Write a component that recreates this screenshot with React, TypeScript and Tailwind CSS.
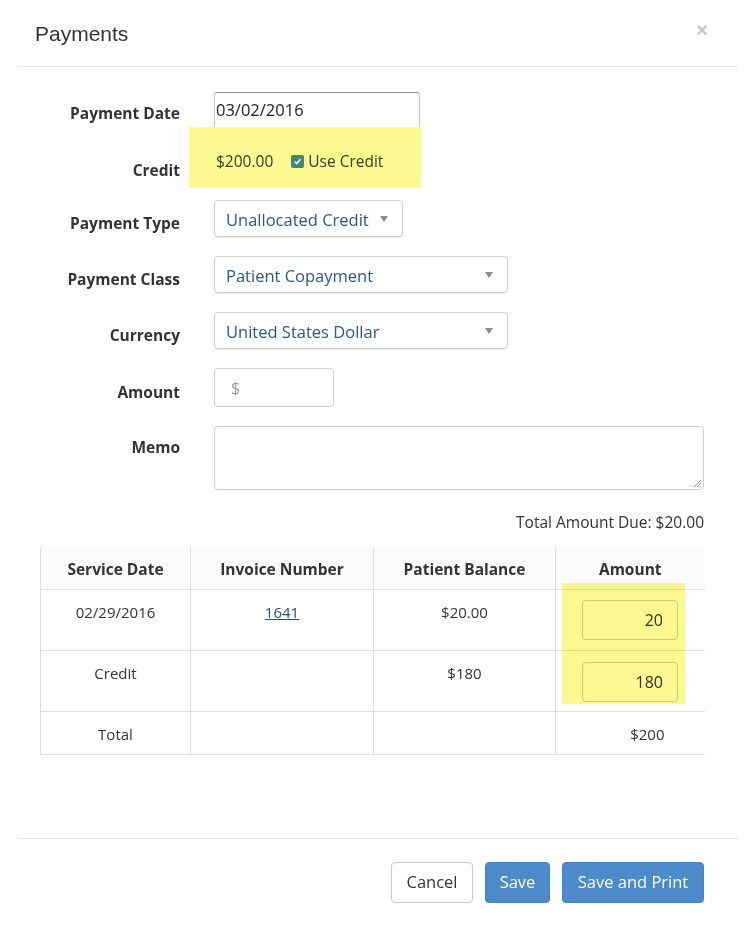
import type { ReactNode } from 'react';

function Caret() {
  return (
    <svg width="8" height="6" viewBox="0 0 8 6" className="shrink-0">
      <path d="M0 0 L8 0 L4 6 Z" fill="#8a8a8a" />
    </svg>
  );
}

function FormRow({ label, children, labelClass = 'mt-[8px]', rowClass = 'items-center' }: { label: string; children: ReactNode; labelClass?: string; rowClass?: string }) {
  return (
    <div className={`flex ${rowClass}`}>
      <div className={`w-[180px] shrink-0 text-right text-[15.5px] font-bold leading-5 text-[#333] ${labelClass}`}>{label}</div>
      <div className="ml-[34px]">{children}</div>
    </div>
  );
}

function Select({ value, width }: { value: string; width: string }) {
  return (
    <div className={`flex h-[37px] items-center justify-between rounded-[4px] border border-[#cfcfcf] bg-white pl-[11px] pr-[14px] shadow-[0_1px_1px_rgba(0,0,0,0.08)] ${width}`}>
      <span className="mt-[3px] text-[16.5px] leading-5 text-[#2d5784]">{value}</span>
      <Caret />
    </div>
  );
}

export default function App() {
  return (
    <div className="min-h-[946px] bg-white font-['Open_Sans',sans-serif] text-[#333]">
      <div className="mx-[18px]">
        {/* header */}
        <div className="flex h-[67px] items-start justify-between border-b border-[#e5e5e5] pt-[20px]">
          <h1 className="pl-[17px] font-['Liberation_Sans',Arial,sans-serif] text-[21px] leading-7 text-[#333]">Payments</h1>
          <span className="mr-[30px] -mt-[4px] font-['Liberation_Sans',Arial,sans-serif] text-[20px] font-bold leading-7 text-[#c4c4c4]">×</span>
        </div>
      </div>

      <div className="pt-[25px]">
        <FormRow label="Payment Date" labelClass="mt-[5px]">
          <div className="flex h-[37px] w-[206px] items-center rounded-[3px] border border-[#c4c4c4] border-t-[#8e8e8e] bg-white pl-[1px] text-[16.5px] text-[#222]">
            03/02/2016
          </div>
        </FormRow>

        <div className="relative -mt-[2px] flex h-[61px] items-start">
          <div className="w-[180px] shrink-0 pt-[33px] text-right text-[15.5px] font-bold leading-5">Credit</div>
          <div className="ml-[9px] flex h-[61px] w-[232px] items-start bg-[#fbf98f] pl-[27px] pt-[24px] text-[15.5px] leading-5 text-[#3a3a2a]">
            <span>$200.00</span>
            <span className="ml-[18px] mt-[4px] flex h-[13px] w-[13px] items-center justify-center rounded-[2px] bg-[#3f8a76]">
              <svg width="9" height="9" viewBox="0 0 10 10">
                <path d="M2 5.2 L4.2 7.4 L8.2 2.6" fill="none" stroke="#fff" strokeWidth="1.8" />
              </svg>
            </span>
            <span className="ml-[4px]">Use Credit</span>
          </div>
        </div>

        <div className="mt-[12px] flex flex-col gap-[19px]">
          <FormRow label="Payment Type">
            <Select value="Unallocated Credit" width="w-[189px]" />
          </FormRow>
          <FormRow label="Payment Class">
            <Select value="Patient Copayment" width="w-[294px]" />
          </FormRow>
          <FormRow label="Currency">
            <Select value="United States Dollar" width="w-[294px]" />
          </FormRow>
          <FormRow label="Amount">
            <div className="flex h-[39px] w-[120px] items-center rounded-[4px] border border-[#cfcfcf] pl-[16px] text-[16px] text-[#999]">$</div>
          </FormRow>
          <FormRow label="Memo" rowClass="items-start" labelClass="pt-[11px]">
            <div className="relative h-[64px] w-[490px] rounded-[4px] border border-[#cfcfcf]">
              <svg width="10" height="10" viewBox="0 0 10 10" className="absolute bottom-[1px] right-[1px]">
                <path d="M9 2 L2 9 M9 5 L5 9 M9 8 L8 9" stroke="#999" strokeWidth="1" />
              </svg>
            </div>
          </FormRow>
        </div>

        <div className="mt-[22px] pr-[52px] text-right text-[15.5px] leading-5">Total Amount Due: $20.00</div>

        <div className="relative ml-[40px] mt-[15px] w-[664px]">
          <table className="w-[664px] table-fixed border-collapse text-[15px] leading-5">
            <colgroup>
              <col className="w-[150px]" />
              <col className="w-[183px]" />
              <col className="w-[182px]" />
              <col className="w-[149px]" />
            </colgroup>
            <thead>
              <tr className="h-[42px] border-b border-[#dedede] bg-[#fbfbfb]">
                <th className="border-l border-[#dedede] pt-[2px] text-center text-[15.5px] font-bold">Service Date</th>
                <th className="border-l border-[#dedede] pt-[2px] text-center text-[15.5px] font-bold">Invoice Number</th>
                <th className="border-l border-[#dedede] pt-[2px] text-center text-[15.5px] font-bold">Patient Balance</th>
                <th className="border-l border-[#dedede] pt-[2px] text-center text-[15.5px] font-bold">Amount</th>
              </tr>
            </thead>
            <tbody>
              <tr className="h-[61px] border-b border-[#dedede]">
                <td className="border-l border-[#dedede] pt-[12px] text-center align-top">02/29/2016</td>
                <td className="border-l border-[#dedede] pt-[12px] text-center align-top">
                  <a className="text-[#2a4e78] underline">1641</a>
                </td>
                <td className="border-l border-[#dedede] pt-[12px] text-center align-top">$20.00</td>
                <td className="border-l border-[#dedede] pl-[26px] pt-[10px] align-top">
                  <div className="flex h-[40px] w-[96px] items-center justify-end rounded-[4px] border border-[#cfcfcf] pr-[14px] text-[16px]">20</div>
                </td>
              </tr>
              <tr className="h-[61px] border-b border-[#dedede]">
                <td className="border-l border-[#dedede] pt-[12px] text-center align-top">Credit</td>
                <td className="border-l border-[#dedede]"></td>
                <td className="border-l border-[#dedede] pt-[12px] text-center align-top">$180</td>
                <td className="border-l border-[#dedede] pl-[26px] pt-[11px] align-top">
                  <div className="flex h-[40px] w-[96px] items-center justify-end rounded-[4px] border border-[#cfcfcf] pr-[14px] text-[16px]">180</div>
                </td>
              </tr>
              <tr className="h-[43px] border-b border-[#dedede]">
                <td className="border-l border-[#dedede] pt-[2px] text-center">Total</td>
                <td className="border-l border-[#dedede]"></td>
                <td className="border-l border-[#dedede]"></td>
                <td className="border-l border-[#dedede] pr-[40px] pt-[2px] text-right">$200</td>
              </tr>
            </tbody>
          </table>
          {/* highlight over the amount inputs */}
          <div className="pointer-events-none absolute left-[522px] top-[36px] h-[121px] w-[123px] bg-[#fbf98f] mix-blend-multiply" />
        </div>

        <div className="mx-[18px] mt-[83px] border-t border-[#e5e5e5]">
          <div className="flex justify-end gap-[12px] pr-[34px] pt-[23px]">
            <button className="h-[41px] w-[82px] rounded-[4px] border border-[#cccccc] bg-white text-[16.5px] text-[#333]">Cancel</button>
            <button className="h-[41px] w-[65px] rounded-[4px] border border-[#4583c2] bg-[#4c8ac9] text-[16.5px] text-white">Save</button>
            <button className="h-[41px] w-[142px] rounded-[4px] border border-[#4583c2] bg-[#4c8ac9] text-[16.5px] text-white">Save and Print</button>
          </div>
        </div>
      </div>
    </div>
  );
}
